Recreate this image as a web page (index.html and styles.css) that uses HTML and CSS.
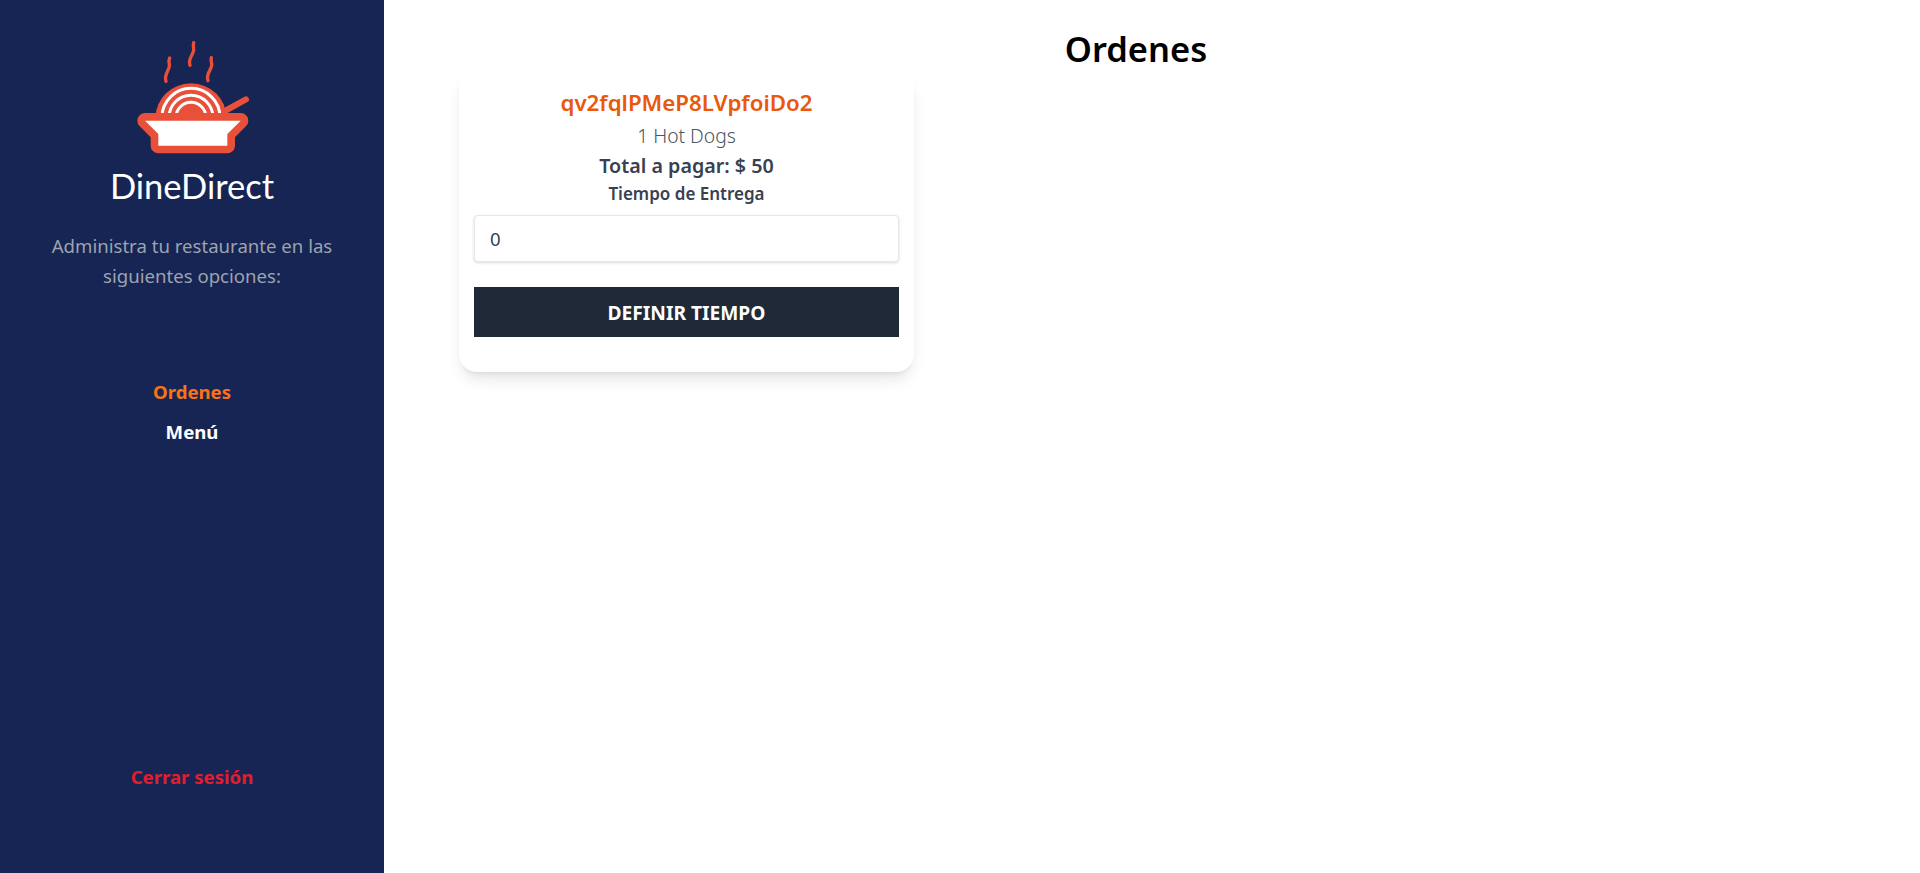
FILE: index.html
```html
<!DOCTYPE html>
<html lang="es">
<head>
    <meta charset="UTF-8">
    <meta name="viewport" content="width=device-width, initial-scale=1.0">
    <title>DineDirect</title>
    <link rel="stylesheet" href="styles.css">
</head>
<body>
    <aside class="sidebar">
        <svg class="logo" viewBox="-9 0 630 390" aria-hidden="true">
            <g fill="none" stroke="#e8503a" stroke-width="10" stroke-linecap="round">
                <path d="M228 154c-8-22 14-36 10-52c-2-8-2-12 1-18"/>
                <path d="M300 106c-8-22 14-34 11-50c-1-7-2-11 0-18"/>
                <path d="M354 152c-8-22 14-36 11-50c-2-8-3-12-1-19"/>
                <path d="M410 240l58-32" stroke-width="18"/>
            </g>
            <path d="M197 262a106 102 0 0 1 212 0z" fill="#e8503a"/>
            <g fill="none" stroke="#fff" stroke-width="9">
                <path d="M216 262a87 87 0 0 1 174 0"/>
                <path d="M237 262a66 66 0 0 1 132 0"/>
                <path d="M258 262a45 45 0 0 1 90 0"/>
            </g>
            <path class="bowl" d="M165 272h287l-40 40v35h-207v-35z"/>
        </svg>
        <div class="brand">DineDirect</div>
        <p class="intro">Administra tu restaurante en las siguientes opciones:</p>
        <nav class="menu">
            <a class="active" href="#">Ordenes</a>
            <a href="#">Menú</a>
        </nav>
        <a class="logout" href="#">Cerrar sesión</a>
    </aside>

    <main class="content">
        <h1>Ordenes</h1>
        <div class="orders">
            <form class="order-card">
                <h2>qv2fqlPMeP8LVpfoiDo2</h2>
                <p class="items">1 Hot Dogs</p>
                <p class="total">Total a pagar: $ 50</p>
                <label for="tiempo">Tiempo de Entrega</label>
                <input type="number" id="tiempo" value="0">
                <button type="button">DEFINIR TIEMPO</button>
            </form>
        </div>
    </main>
</body>
</html>
```

FILE: styles.css
```css
* {
    box-sizing: border-box;
}

body {
    margin: 0;
    height: 873px;
    display: flex;
    overflow: hidden;
    font-family: "Noto Sans", "Open Sans", Arial, sans-serif;
    background-color: #ffffff;
}

/* Barra lateral */
.sidebar {
    width: 384px;
    flex-shrink: 0;
    display: flex;
    flex-direction: column;
    align-items: center;
    padding-top: 30px;
    background-color: #172554;
}

.logo {
    width: 210px;
    height: 130px;
    display: block;
}

.bowl {
    fill: #ffffff;
    stroke: #e8503a;
    stroke-width: 46;
    stroke-linejoin: round;
    paint-order: stroke;
}

.brand {
    margin-top: 3px;
    color: #ffffff;
    font-family: Lato, Arial, sans-serif;
    font-size: 34.5px;
    font-weight: 400;
    line-height: 46px;
}

.intro {
    width: 300px;
    margin: 22px 0 0;
    color: #9ca3af;
    font-size: 18.6px;
    line-height: 30px;
    text-align: center;
}

.menu {
    display: flex;
    flex-direction: column;
    align-items: center;
    gap: 14px;
    margin-top: 88px;
}

.menu a,
.logout {
    color: #ffffff;
    font-size: 18.6px;
    font-weight: 700;
    line-height: 26px;
    text-decoration: none;
}

.menu a.active {
    color: #f97316;
}

.logout {
    margin-top: 319px;
    color: #e11d2e;
}

/* Contenido */
.content {
    flex: 1;
}

h1 {
    margin: 0;
    padding: 27px 32px 0 0;
    color: #000000;
    font-size: 34.5px;
    font-weight: 600;
    line-height: 43px;
    text-align: center;
}

.orders {
    padding-left: 75px;
}

.order-card {
    width: 455px;
    height: 302px;
    display: flex;
    flex-direction: column;
    align-items: center;
    padding: 18px 15px 0;
    border-radius: 18px;
    background-color: #ffffff;
    box-shadow: 0 10px 15px -3px rgba(0, 0, 0, 0.1), 0 4px 6px -4px rgba(0, 0, 0, 0.1);
}

.order-card h2 {
    margin: 0;
    color: #ea580c;
    font-size: 22.3px;
    font-weight: 600;
    line-height: 30px;
}

.items {
    margin: 4px 0 0;
    color: #4b5563;
    font-size: 19.3px;
    font-weight: 300;
    line-height: 28px;
}

.total {
    margin: 2px 0 0;
    color: #374151;
    font-size: 19.7px;
    font-weight: 600;
    line-height: 28px;
}

label {
    color: #374151;
    font-size: 17px;
    font-weight: 600;
    line-height: 28px;
}

input {
    width: 100%;
    height: 47px;
    margin-top: 7px;
    padding: 0 15px;
    border: 1px solid #e5e7eb;
    border-radius: 4px;
    color: #374151;
    font-family: inherit;
    font-size: 18.6px;
    box-shadow: 0 1px 3px rgba(0, 0, 0, 0.15);
}

button {
    width: 100%;
    height: 50px;
    margin-top: 25px;
    border: none;
    color: #ffffff;
    background-color: #1f2937;
    font-family: inherit;
    font-size: 19.2px;
    font-weight: 700;
}
```
